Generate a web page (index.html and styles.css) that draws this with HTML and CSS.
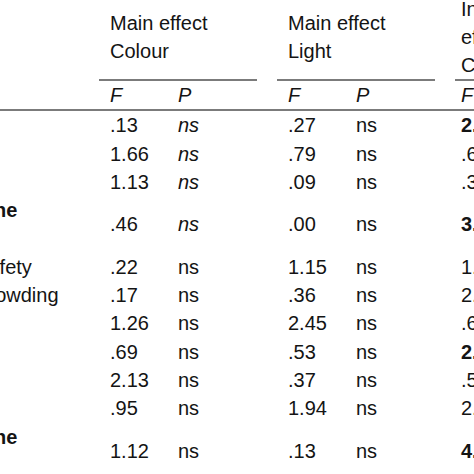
FILE: index.html
```html
<!DOCTYPE html>
<html lang="en">
<head>
<meta charset="utf-8">
<title>ANOVA results</title>
<link rel="stylesheet" href="styles.css">
</head>
<body>
<div class="crop">
  <table class="anova">
    <colgroup>
      <col class="c-label">
      <col class="c-f"><col class="c-p">
      <col class="c-f"><col class="c-p">
      <col class="c-f"><col class="c-p">
    </colgroup>
    <thead>
      <tr class="group-row">
        <th></th>
        <th colspan="2"><div class="group">Main effect<br>Colour</div></th>
        <th colspan="2"><div class="group">Main effect<br>Light</div></th>
        <th colspan="2"><div class="group last">Interaction<br>effect<br>Colour × Light</div></th>
      </tr>
      <tr class="stat-row">
        <th></th>
        <th class="num">F</th><th class="pv">P</th>
        <th class="num">F</th><th class="pv">P</th>
        <th class="num last">F</th><th class="pv">P</th>
      </tr>
    </thead>
    <tbody>
      <tr><td class="label">Pleasure</td><td class="num">.13</td><td class="pv it">ns</td><td class="num">.27</td><td class="pv">ns</td><td class="num last b">2.41</td><td class="pv">ns</td></tr>
      <tr><td class="label">Arousal</td><td class="num">1.66</td><td class="pv it">ns</td><td class="num">.79</td><td class="pv">ns</td><td class="num last">.63</td><td class="pv">ns</td></tr>
      <tr><td class="label">Dominance</td><td class="num">1.13</td><td class="pv it">ns</td><td class="num">.09</td><td class="pv">ns</td><td class="num last">.32</td><td class="pv">ns</td></tr>
      <tr><td class="label b">Ratings of the<br>street</td><td class="num">.46</td><td class="pv it">ns</td><td class="num">.00</td><td class="pv">ns</td><td class="num last b">3.85</td><td class="pv">ns</td></tr>
      <tr><td class="label">Perceived safety</td><td class="num">.22</td><td class="pv">ns</td><td class="num">1.15</td><td class="pv">ns</td><td class="num last">1.48</td><td class="pv">ns</td></tr>
      <tr><td class="label">Perceived crowding</td><td class="num">.17</td><td class="pv">ns</td><td class="num">.36</td><td class="pv">ns</td><td class="num last">2.07</td><td class="pv">ns</td></tr>
      <tr><td class="label">Comfort</td><td class="num">1.26</td><td class="pv">ns</td><td class="num">2.45</td><td class="pv">ns</td><td class="num last">.61</td><td class="pv">ns</td></tr>
      <tr><td class="label">Beauty</td><td class="num">.69</td><td class="pv">ns</td><td class="num">.53</td><td class="pv">ns</td><td class="num last b">2.95</td><td class="pv">ns</td></tr>
      <tr><td class="label">Warmth</td><td class="num">2.13</td><td class="pv">ns</td><td class="num">.37</td><td class="pv">ns</td><td class="num last">.55</td><td class="pv">ns</td></tr>
      <tr><td class="label">Interest</td><td class="num">.95</td><td class="pv">ns</td><td class="num">1.94</td><td class="pv">ns</td><td class="num last">2.26</td><td class="pv">ns</td></tr>
      <tr><td class="label b">Ratings of the<br>lighting</td><td class="num">1.12</td><td class="pv">ns</td><td class="num">.13</td><td class="pv">ns</td><td class="num last b">4.12</td><td class="pv">ns</td></tr>
    </tbody>
  </table>
</div>
</body>
</html>
```
FILE: styles.css
```css
html, body {
  margin: 0;
  padding: 0;
  background: #ffffff;
}

.crop {
  width: 474px;
  height: 474px;
  overflow: hidden;
}

.anova {
  margin-left: -116px;
  margin-top: -5px;
  width: 749px;
  table-layout: fixed;
  border-collapse: collapse;
  border-spacing: 0;
  font-family: "Liberation Sans", Arial, sans-serif;
  font-size: 20px;
  color: #141414;
}

.c-label { width: 215px; }
.c-f { width: 79px; }
.c-p { width: 99px; }

.anova th,
.anova td {
  padding: 0;
  font-weight: normal;
  text-align: left;
  vertical-align: middle;
  line-height: 28.3px;
  white-space: nowrap;
}

.group-row th {
  vertical-align: bottom;
}

.group {
  height: 84px;
  margin-right: 20px;
  padding-left: 11px;
  border-bottom: 2px solid #7b7b7b;
  display: flex;
  flex-direction: column;
  justify-content: center;
  line-height: 28px;
}

.group.last {
  padding-left: 6px;
}

.stat-row th {
  height: 27px;
  font-style: italic;
  border-bottom: 2px solid #7b7b7b;
}

.num {
  padding-left: 11px !important;
}

.num.last {
  padding-left: 6px !important;
}

.label {
  overflow: hidden;
}

.it {
  font-style: italic;
}

.b {
  font-weight: bold !important;
}
```
